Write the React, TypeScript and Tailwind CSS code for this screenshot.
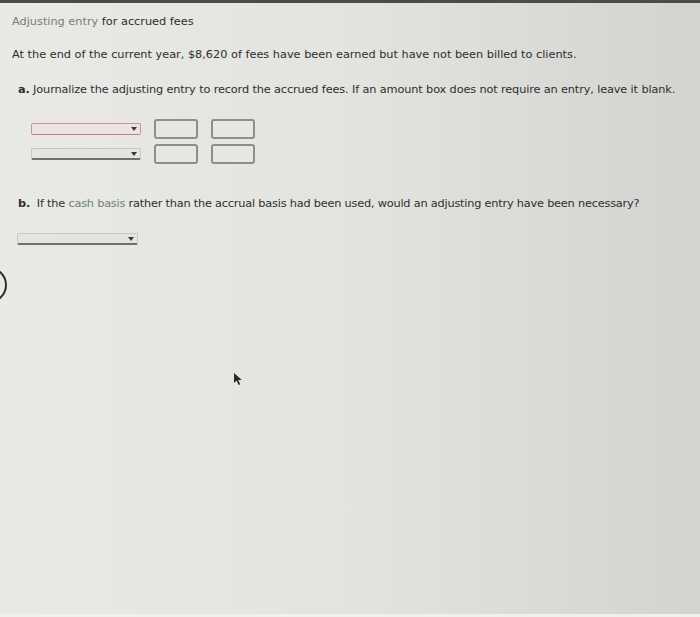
function Select({ pink = false, className = '' }: { pink?: boolean; className?: string }) {
  return (
    <div
      className={`relative h-[12px] rounded-[2px] border ${
        pink
          ? 'border-[#d48fa6] border-b-[#c27d95] bg-[#ede3e5]'
          : 'border-[#c9c9c4] border-b-2 border-b-[#6f6f6c] bg-[#e4e4e0]'
      } ${className}`}
    >
      <span className="absolute right-[3px] top-1/2 -translate-y-1/2 h-0 w-0 border-x-[3px] border-t-[4px] border-x-transparent border-t-[#3a3a3a]" />
    </div>
  )
}

function AmountBox() {
  return <div className="h-[20px] w-[44px] rounded-[3px] border-2 border-[#8e8e8b] bg-[#e6e6e2]" />
}

export default function App() {
  return (
    <div
      className="relative h-[617px] w-[700px] overflow-hidden bg-gradient-to-r from-[#e9e9e5] via-[#e3e3df] to-[#d3d3cf] text-[#2e2e2e] text-[11.3px]"
      style={{ fontFamily: '"DejaVu Sans", Verdana, sans-serif' }}
    >
      <div className="h-[3px] bg-[#4b4b4b]" />

      <div className="px-[12px] pt-[11px]">
        <p className="leading-[16px] whitespace-nowrap">
          <span className="text-[#7c7c78]">Adjusting entry</span> for accrued fees
        </p>

        <p className="mt-[17px] leading-[16px] whitespace-nowrap">
          At the end of the current year, $8,620 of fees have been earned but have not been billed to clients.
        </p>

        <p className="mt-[19px] pl-[6px] leading-[16px] whitespace-nowrap tracking-[-0.13px]">
          <b>a.</b>&nbsp;Journalize the adjusting entry to record the accrued fees. If an amount box does not require an entry, leave it blank.
        </p>

        <div className="mt-[21px] ml-[19px] flex flex-col gap-[5px]">
          <div className="flex items-center gap-[13px]">
            <Select pink className="w-[110px]" />
            <div className="flex gap-[13px]">
              <AmountBox />
              <AmountBox />
            </div>
          </div>
          <div className="flex items-center gap-[13px]">
            <Select className="w-[110px]" />
            <div className="flex gap-[13px]">
              <AmountBox />
              <AmountBox />
            </div>
          </div>
        </div>

        <p className="mt-[32px] pl-[6px] leading-[16px] whitespace-nowrap tracking-[-0.2px]">
          <b>b.</b>&nbsp;&nbsp;If the <span className="text-[#6f7f76]">cash basis</span> rather than the accrual basis had been used, would an adjusting entry have been necessary?
        </p>

        <Select className="mt-[21px] ml-[5px] w-[121px]" />
      </div>

      <div className="absolute left-[-29px] top-[267px] h-[36px] w-[36px] rounded-full border-2 border-[#2f2f2f]" />

      <svg className="absolute left-[233px] top-[372px]" width="12" height="14" viewBox="0 0 12 14">
        <path d="M1 1 L1 11 L3.6 8.6 L5.6 13 L7.2 12.3 L5.3 8 L8.8 8 Z" fill="#2a2a2a" />
      </svg>

      <div className="absolute bottom-0 left-0 h-[3px] w-full bg-[#f0f0ee]" />
    </div>
  )
}
